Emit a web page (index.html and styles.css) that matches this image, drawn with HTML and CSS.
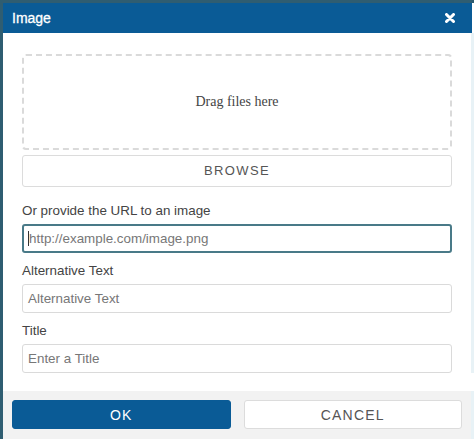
FILE: index.html
```html
<!DOCTYPE html>
<html>
<head>
<meta charset="utf-8">
<link rel="stylesheet" href="styles.css">
</head>
<body>
<div class="dialog">
  <div class="header">
    <span class="title">Image</span>
    <svg class="close" width="10" height="10" viewBox="0 0 10 10"><path d="M1.5 1.5 L8.5 8.5 M8.5 1.5 L1.5 8.5" stroke="#fff" stroke-width="3" stroke-linecap="round"/></svg>
  </div>
  <div class="content">
    <div class="dropzone">Drag files here</div>
    <button class="browse">BROWSE</button>
    <label class="label label-first">Or provide the URL to an image</label>
    <div class="input focused"><span class="caret"></span><span class="ph">http://example.com/image.png</span></div>
    <label class="label">Alternative Text</label>
    <div class="input"><span class="ph">Alternative Text</span></div>
    <label class="label">Title</label>
    <div class="input"><span class="ph">Enter a Title</span></div>
  </div>
  <div class="footer">
    <button class="btn ok">OK</button>
    <button class="btn cancel">CANCEL</button>
  </div>
</div>
</body>
</html>
```

FILE: styles.css
```css
html, body {
  margin: 0;
  padding: 0;
  height: 100%;
}
body {
  background: #2f5d71;
  font-family: "Liberation Sans", Arial, sans-serif;
  overflow: hidden;
}
.dialog {
  margin: 3px 0 0 3px;
  width: 471px;
  height: 436px;
  background: #fff;
  display: flex;
  flex-direction: column;
}
.header {
  height: 31px;
  background: #0a5b96;
  display: flex;
  align-items: center;
  justify-content: space-between;
  padding: 0 17px 0 9px;
  margin-right: 2px;
}
.title {
  color: #fff;
  font-size: 14px;
  font-weight: normal;
  -webkit-text-stroke: 0.3px #fff;
}
.close {
  display: block;
}
.content {
  flex: 1;
  padding: 21px 19px 0 19px;
  display: flex;
  flex-direction: column;
  border-right: 3px solid #e8f2f6;
}
.dropzone {
  box-sizing: border-box;
  height: 96px;
  border: 2px dashed #dadada;
  border-radius: 4px;
  display: flex;
  align-items: center;
  justify-content: center;
  font-family: "Liberation Serif", "Times New Roman", serif;
  font-size: 14px;
  color: #444;
}
.browse {
  box-sizing: border-box;
  margin-top: 5px;
  height: 32px;
  border: 1px solid #dcdcdc;
  border-radius: 3px;
  background: #fff;
  font-family: "Liberation Sans", Arial, sans-serif;
  font-size: 13px;
  letter-spacing: 1.4px;
  color: #555;
  padding: 0;
}
.label {
  display: block;
  font-size: 13.4px;
  color: #444;
  margin-top: 10px;
  margin-bottom: 5px;
  line-height: 16px;
}
.label-first {
  margin-top: 16px;
}
.input {
  height: 27px;
  border: 1px solid #dadada;
  border-radius: 3px;
  display: flex;
  align-items: center;
  padding-left: 5px;
  font-size: 13.4px;
}
.input.focused {
  border: 2px solid #497a88;
  height: 25px;
  padding-left: 4px;
}
.caret {
  width: 1px;
  height: 15px;
  background: #333;
}
.ph {
  color: #777;
}
.footer {
  height: 50px;
  margin-top: 18px;
  background: #f2f2f2;
  display: flex;
  align-items: center;
  gap: 13px;
  padding: 0 9px;
  border-right: 3px solid #e8f2f6;
}
.btn {
  flex: 1;
  height: 29px;
  border-radius: 3px;
  font-family: "Liberation Sans", Arial, sans-serif;
  font-size: 14px;
  letter-spacing: 1.2px;
  padding: 0;
}
.ok {
  background: #0a5b96;
  border: 1px solid #0a5b96;
  color: #fff;
}
.cancel {
  background: #fff;
  border: 1px solid #dcdcdc;
  color: #555;
}
```
